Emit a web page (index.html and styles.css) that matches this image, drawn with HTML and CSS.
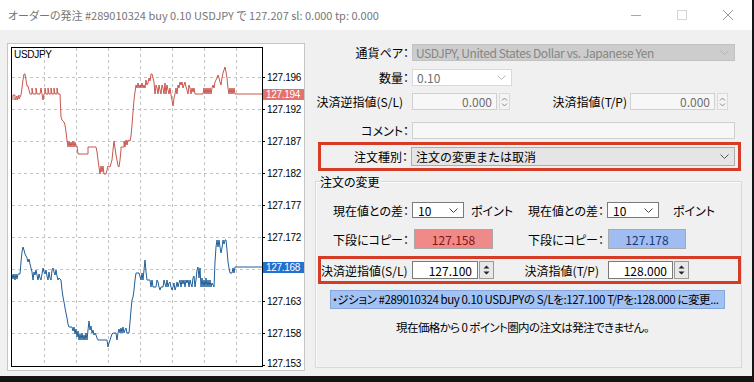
FILE: index.html
```html
<!DOCTYPE html>
<html lang="ja">
<head>
<meta charset="utf-8">
<link rel="stylesheet" href="styles.css">
</head>
<body>
<div class="window">
  <div class="titlebar">
    <span class="title">オーダーの発注 #289010324 buy 0.10 USDJPY で 127.207 sl: 0.000 tp: 0.000</span>
    <div class="controls">
      <span class="ctl"><svg width="12" height="12" viewBox="0 0 12 12"><path d="M1 6.5H11" stroke="#a8a8a8" stroke-width="1"/></svg></span>
      <span class="ctl"><svg width="12" height="12" viewBox="0 0 12 12"><rect x="1.5" y="1.5" width="9" height="9" fill="none" stroke="#d6d6d6"/></svg></span>
      <span class="ctl"><svg width="12" height="12" viewBox="0 0 12 12"><path d="M1 1L11 11M11 1L1 11" stroke="#9a9a9a" stroke-width="1"/></svg></span>
    </div>
  </div>
  <div class="body">
    <div class="chart-panel">
      <svg class="chart" width="296" height="326" viewBox="8 44 296 326">
        <g class="grid">
          <path d="M44.5 48V366M76.5 48V366M108.5 48V366M140.5 48V366M172.5 48V366M204.5 48V366M236.5 48V366"/>
          <path d="M12 77.5H262M12 109.5H262M12 141.5H262M12 173.5H262M12 205.5H262M12 237.5H262M12 269.5H262M12 301.5H262M12 333.5H262"/>
        </g>
        <rect x="11.5" y="47.5" width="251" height="319" fill="none" stroke="#000"/>
        <path class="ticks" d="M262 77.5H265M262 109.5H265M262 141.5H265M262 173.5H265M262 205.5H265M262 237.5H265M262 301.5H265M262 333.5H265M262 365.5H265"/>
        <text class="sym" x="14" y="57.5">USDJPY</text>
        <polyline class="red" points="13,100 13,95 15,95 15,100 17,96 17,100 19,95 19,99 21,95 22,88 23,80 24,74 25,74 26,80 27,86 28,86 29,90 30,94 32,94 32,88 33,94 36,94 36,88 37,94 40,94 41,88 42,94 43,100 44,94 45,94 45,88 46,94 48,94 48,88 49,94 51,94 51,88 52,94 54,94 54,88 55,94 57,94 57,88 58,94 60,94 61,117 62,120 64,122 65,125 66,132 67,140 68,147 69,141 70,147 71,142 72,147 73,141 74,147 75,142 76,147 77,146 78,154 88,154 88,147 96,147 97,152 98,160 99,167 100,174 101,166 102,172 103,166 104,174 106,174 107,170 108,166 110,167 112,160 113,150 114,141 115,148 116,155 117,160 118,166 119,167 120,160 121,150 121,147 124,147 124,141 125,147 126,140 127,145 128,140 130,141 131,136 132,125 133,112 134,100 135,92 136,85 137,88 138,83 139,88 140,85 141,88 142,83 143,88 144,85 145,88 146,80 147,85 148,83 149,78 150,81 151,74 152,74 153,78 154,82 155,94 156,85 157,88 158,94 159,85 160,90 161,94 162,85 163,88 164,94 165,83 166,94 167,85 168,90 169,94 170,88 171,95 172,100 173,106 174,98 175,94 176,88 177,94 178,85 179,88 180,82 181,85 182,82 183,88 184,85 185,82 186,87 187,90 188,94 189,85 190,88 191,94 192,88 193,92 194,88 195,94 203,94 204,88 205,94 206,88 207,94 208,88 209,94 210,88 211,94 212,88 213,85 214,88 215,82 216,80 217,78 218,75 219,78 220,82 221,85 222,78 223,73 224,70 225,67 226,72 227,78 228,88 229,94 230,88 231,94 232,88 233,94 234,88 235,94 262,94"/>
        <polyline class="blue" points="12,274 13,279 14,274 15,280 16,274 17,279 18,274 20,274 21,262 22,252 23,247 24,250 25,254 26,256 27,258 28,262 29,259 30,264 31,268 32,272 33,280 34,272 35,275 36,270 37,275 38,280 39,274 40,278 41,280 42,274 43,268 44,272 45,274 46,270 47,276 48,280 49,272 50,278 51,280 52,270 53,268 54,272 55,275 56,270 57,276 58,280 59,278 60,279 61,280 62,290 63,297 64,302 65,308 66,313 67,318 68,324 69,327 72,327 73,331 74,327 75,334 76,329 77,337 78,331 79,340 80,334 81,340 82,333 83,340 84,335 85,340 86,333 87,340 88,330 89,321 90,330 91,326 92,333 93,330 94,335 95,333 96,335 97,338 98,340 107,340 108,347 109,343 110,340 112,334 113,333 116,333 117,340 118,333 119,329 120,333 121,328 122,333 123,327 124,333 125,330 126,328 127,333 129,333 130,322 131,310 132,300 133,297 134,290 135,280 136,273 139,273 141,280 142,273 143,280 144,270 145,260 146,272 147,280 150,280 151,287 152,280 153,287 156,287 157,280 158,282 159,287 160,290 161,287 163,287 164,280 165,284 166,287 167,280 168,287 169,283 170,282 171,287 172,290 173,287 174,283 175,290 176,287 177,282 178,287 179,283 180,280 181,287 182,280 183,284 184,280 185,287 186,280 187,283 188,280 189,287 190,280 191,284 192,287 193,278 194,276 195,287 196,280 197,270 198,267 199,278 200,268 201,287 202,278 203,287 204,280 205,287 206,278 207,287 208,280 209,287 210,280 211,287 212,283 214,287 215,262 216,247 217,240 218,247 219,240 220,247 221,253 222,248 223,240 224,244 225,240 226,240 227,250 228,262 229,268 230,273 232,273 233,268 234,273 235,267 262,267"/>
        <g class="axis">
          <text x="267" y="81">127.196</text>
          <text x="267" y="113">127.192</text>
          <text x="267" y="145">127.187</text>
          <text x="267" y="177">127.182</text>
          <text x="267" y="209">127.177</text>
          <text x="267" y="241">127.172</text>
          <text x="267" y="305">127.163</text>
          <text x="267" y="337">127.158</text>
          <text x="267" y="367">127.153</text>
        </g>
        <rect x="263" y="89" width="41" height="11" fill="#e3716c"/>
        <text class="cur" x="266" y="98">127.194</text>
        <rect x="263" y="262" width="41" height="11" fill="#2470d2"/>
        <text class="cur" x="266" y="271">127.168</text>
      </svg>
    </div>

    <div class="form">
      <div class="row row1">
        <span class="lbl">通貨ペア：</span>
        <div class="combo disabled"><span>USDJPY, United States Dollar vs. Japanese Yen</span><svg class="chev" width="9" height="5" viewBox="0 0 9 5"><path d="M0.5 0.5L4.5 4.5L8.5 0.5" fill="none" stroke="#b4b4b4"/></svg></div>
      </div>
      <div class="row row2">
        <span class="lbl">数量：</span>
        <div class="combo light"><span>0.10</span><svg class="chev" width="9" height="5" viewBox="0 0 9 5"><path d="M0.5 0.5L4.5 4.5L8.5 0.5" fill="none" stroke="#b4b4b4"/></svg></div>
      </div>
      <div class="row row3">
        <span class="lbl pr">決済逆指値(S/L)</span>
        <div class="spin dis"><span class="val">0.000</span></div>
        <div class="arrows dis"><svg width="9" height="12" viewBox="0 0 9 12"><path d="M2 4.5L4.5 2L7 4.5M2 7.5L4.5 10L7 7.5" fill="none" stroke="#8a8a8a"/></svg></div>
        <span class="lbl2">決済指値(T/P)</span>
        <div class="spin dis"><span class="val">0.000</span></div>
        <div class="arrows dis"><svg width="9" height="12" viewBox="0 0 9 12"><path d="M2 4.5L4.5 2L7 4.5M2 7.5L4.5 10L7 7.5" fill="none" stroke="#8a8a8a"/></svg></div>
      </div>
      <div class="row row4">
        <span class="lbl">コメント：</span>
        <div class="comment"></div>
      </div>

      <div class="redbox rb1">
        <span class="lbl rl">注文種別：</span>
        <div class="combo type"><span>注文の変更または取消</span><svg class="chev" width="9" height="5" viewBox="0 0 9 5"><path d="M0.5 0.5L4.5 4.5L8.5 0.5" fill="none" stroke="#555"/></svg></div>
      </div>

      <div class="group">
        <span class="gtitle">注文の変更</span>
        <div class="grow ga">
          <div class="half">
            <span class="glbl">現在値との差：</span>
            <div class="combo pts"><span>10</span><svg class="chev" width="9" height="5" viewBox="0 0 9 5"><path d="M0.5 0.5L4.5 4.5L8.5 0.5" fill="none" stroke="#444"/></svg></div>
            <span class="unit">ポイント</span>
          </div>
          <span class="glbl right">現在値との差：</span>
          <div class="combo pts"><span>10</span><svg class="chev" width="9" height="5" viewBox="0 0 9 5"><path d="M0.5 0.5L4.5 4.5L8.5 0.5" fill="none" stroke="#444"/></svg></div>
          <span class="unit u2">ポイント</span>
        </div>
        <div class="grow gb">
          <div class="half">
            <span class="glbl">下段にコピー：</span>
            <div class="copy red">127.158</div>
          </div>
          <span class="glbl right">下段にコピー：</span>
          <div class="copy blue">127.178</div>
        </div>

        <div class="redbox rb2">
          <span class="glbl sl-lbl">決済逆指値(S/L)</span>
          <div class="spin on sl"><span class="val">127.100</span></div>
          <div class="arrows on"><svg width="9" height="14" viewBox="0 0 9 14"><path d="M4.5 2.5L7.5 5.5H1.5Z M4.5 11.5L7.5 8.5H1.5Z" fill="#222"/></svg></div>
          <span class="glbl tp-lbl">決済指値(T/P)</span>
          <div class="spin on tp"><span class="val">128.000</span></div>
          <div class="arrows on"><svg width="9" height="14" viewBox="0 0 9 14"><path d="M4.5 2.5L7.5 5.5H1.5Z M4.5 11.5L7.5 8.5H1.5Z" fill="#222"/></svg></div>
        </div>

        <div class="summary">・ジション #289010324 buy 0.10 USDJPYの S/Lを:127.100 T/Pを:128.000 に変更...</div>
        <div class="note">現在価格から 0 ポイント圏内の注文は発注できません。</div>
      </div>
    </div>
  </div>
</div>
</body>
</html>
```

FILE: styles.css
```css
html, body {
  margin: 0;
  padding: 0;
}
body {
  width: 754px;
  height: 382px;
  overflow: hidden;
  background: #141414;
  font-family: "Noto Sans CJK JP", "Noto Sans", sans-serif;
  font-size: 12px;
  color: #000;
}
.window {
  width: 752px;
  height: 376px;
  background: #f0f0f0;
  display: flex;
  flex-direction: column;
}
.titlebar {
  height: 30px;
  flex: none;
  background: #fff;
  display: flex;
  align-items: center;
  padding-left: 8px;
}
.title {
  flex: 1;
  color: #767676;
  white-space: nowrap;
  font-size: 11px;
  font-feature-settings: "palt" 1;
}
.controls {
  display: flex;
  height: 30px;
  margin-right: 1px;
}
.ctl {
  width: 46px;
  display: flex;
  align-items: center;
  justify-content: center;
}
.body {
  flex: 1;
  display: flex;
  align-items: flex-start;
  padding: 13px 0 0 7px;
}
.chart-panel {
  flex: none;
  width: 296px;
  height: 326px;
  border: 1px solid #c6c6c6;
  background: #fff;
}
.chart {
  display: block;
  font-family: "Liberation Sans", Arial, sans-serif;
}
.grid path {
  stroke: #c4c4c4;
  stroke-width: 1;
  stroke-dasharray: 3 3;
  fill: none;
}
.ticks {
  stroke: #000;
  fill: none;
}
.chart text {
  font-size: 10px;
  letter-spacing: -0.3px;
}
.chart .cur {
  fill: #fff;
}
.red {
  fill: none;
  stroke: #c9564f;
  stroke-width: 1;
}
.blue {
  fill: none;
  stroke: #215f98;
  stroke-width: 1;
}

/* form */
.form {
  width: 432px;
  margin-left: 7px;
  padding-top: 1px;
}
.row {
  display: flex;
  align-items: center;
  height: 17px;
}
.row2 { margin-top: 8px; }
.row3 { margin-top: 7px; }
.row4 { margin-top: 12px; }
.lbl {
  flex: none;
  width: 97px;
  margin-right: 3px;
  text-align: right;
  white-space: nowrap;
  line-height: 17px;
  font-feature-settings: "palt" 1;
}
.lbl.pr {
  box-sizing: border-box;
  padding-right: 6px;
}
.lbl2 {
  flex: none;
  width: 117px;
  margin-right: 3px;
  text-align: right;
  white-space: nowrap;
  line-height: 17px;
  font-feature-settings: "palt" 1;
}
.combo {
  box-sizing: border-box;
  display: flex;
  align-items: center;
  justify-content: space-between;
  height: 17px;
  padding: 0 5px 0 3px;
  white-space: nowrap;
  overflow: hidden;
}
.combo.disabled {
  background: #cdcdcd;
  border: 1px solid #c2c2c2;
  color: #858585;
  width: 323px;
  letter-spacing: -0.4px;
}
.combo.light {
  background: #fff;
  border: 1px solid #d9d9d9;
  color: #6f6f6f;
  width: 100px;
  padding-left: 4px;
}
.chev { flex: none; }
.spin {
  box-sizing: border-box;
  height: 17px;
  display: flex;
  align-items: center;
  justify-content: flex-end;
  padding-right: 4px;
}
.spin.dis {
  width: 85px;
  background: #f7f7f7;
  border: 1px solid #d0d0d0;
  color: #6f6f6f;
}
.arrows {
  box-sizing: border-box;
  display: flex;
  align-items: center;
  justify-content: center;
}
.arrows.dis {
  width: 11px;
  height: 17px;
  margin-left: 2px;
  border: 1px solid #dadada;
  background: #f4f4f4;
}
.comment {
  box-sizing: border-box;
  width: 323px;
  height: 17px;
  background: #f7f7f7;
  border: 1px solid #d0d0d0;
}

/* red annotation boxes */
.redbox {
  box-sizing: border-box;
  border: 3px solid #d63b25;
  display: flex;
  align-items: center;
}
.rb1 {
  width: 423px;
  height: 29px;
  margin: 3px 0 0 6px;
}
.lbl.rl {
  width: 87px;
}
.combo.type {
  width: 324px;
  height: 19px;
  background: #e5e5e5;
  border: 1px solid #adadad;
  padding-left: 4px;
}

/* group box */
.group {
  box-sizing: border-box;
  width: 427px;
  height: 187px;
  margin: 10px 0 0 3px;
  border: 1px solid #d9d9d9;
  box-shadow: inset 1px 1px 0 #fafafa;
}
.gtitle {
  display: block;
  width: fit-content;
  margin: -8px 0 0 4px;
  padding: 0 1px 0 0;
  background: #f0f0f0;
  line-height: 16px;
  font-feature-settings: "palt" 1;
}
.grow {
  display: flex;
  align-items: center;
}
.half {
  flex: none;
  width: 204px;
  display: flex;
  align-items: center;
}
.glbl {
  flex: none;
  width: 93px;
  margin-right: 3px;
  text-align: right;
  white-space: nowrap;
  line-height: 17px;
  font-feature-settings: "palt" 1;
}
.glbl.right {
  width: 84px;
}
.ga {
  height: 16px;
  margin-top: 12px;
}
.combo.pts {
  width: 52px;
  height: 16px;
  background: #fff;
  border: 1px solid #7a7a7a;
  padding-left: 5px;
}
.unit {
  margin-left: 7px;
  white-space: nowrap;
  font-feature-settings: "palt" 1;
}
.unit.u2 { margin-left: 14px; }
.gb {
  height: 20px;
  margin-top: 11px;
}
.gb .glbl { margin-right: 5px; }
.gb .glbl.right { margin-right: 4px; }
.copy {
  box-sizing: border-box;
  height: 20px;
  width: 79px;
  display: flex;
  align-items: center;
  justify-content: center;
  border: 1px solid #a9a9a9;
}
.copy.red {
  background: #f08a88;
  color: #7d1616;
}
.copy.blue {
  width: 78px;
  background: #9fbdf1;
  color: #1d3578;
}
.rb2 {
  width: 423px;
  height: 28px;
  margin: 7px 0 0 2px;
}
.glbl.sl-lbl {
  width: 88px;
  box-sizing: border-box;
  padding-right: 6px;
}
.glbl.tp-lbl {
  width: 111px;
  box-sizing: border-box;
  padding-right: 6px;
}
.spin.on {
  height: 18px;
  background: #fff;
  border: 1px solid #7a7a7a;
  color: #000;
  padding-right: 5px;
}
.spin.sl { width: 66px; }
.spin.tp { width: 65px; }
.arrows.on {
  width: 15px;
  height: 18px;
  margin-left: 1px;
  border: 1px solid #9a9a9a;
  background: #e8e8e8;
}
.summary {
  box-sizing: border-box;
  width: 395px;
  height: 19px;
  margin: 6px 0 0 14px;
  padding-left: 1px;
  background: #a3c2f4;
  border: 1px solid #86a6dc;
  line-height: 17px;
  white-space: nowrap;
  overflow: hidden;
  font-size: 11.5px;
  letter-spacing: -0.4px;
  font-feature-settings: "palt" 1;
}
.note {
  margin-top: 10px;
  padding-right: 12px;
  line-height: 16px;
  text-align: center;
  white-space: nowrap;
  font-size: 11.5px;
  letter-spacing: -0.6px;
  font-feature-settings: "palt" 1;
}
```
